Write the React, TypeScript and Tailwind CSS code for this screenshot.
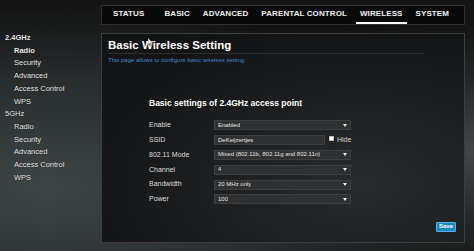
import React from "react";

const sideItems = [
  { label: "2.4GHz", sub: false, bold: true },
  { label: "Radio", sub: true, bold: true },
  { label: "Security", sub: true, bold: false },
  { label: "Advanced", sub: true, bold: false },
  { label: "Access Control", sub: true, bold: false },
  { label: "WPS", sub: true, bold: false },
  { label: "5GHz", sub: false, bold: false },
  { label: "Radio", sub: true, bold: false },
  { label: "Security", sub: true, bold: false },
  { label: "Advanced", sub: true, bold: false },
  { label: "Access Control", sub: true, bold: false },
  { label: "WPS", sub: true, bold: false },
];

const navItems = ["STATUS", "BASIC", "ADVANCED", "PARENTAL CONTROL", "WIRELESS", "SYSTEM"];

function Arrow() {
  return (
    <svg width="4" height="3" viewBox="0 0 4 3" className="shrink-0">
      <path d="M0 0h4L2 3z" fill="#f2f2f2" />
    </svg>
  );
}

function SelectBox({ value }: { value: string }) {
  return (
    <div className="w-[137px] h-[10px] bg-[#2f3031] border border-[#3d3e3f] flex items-center justify-between pl-[3px] pr-[3px] text-[6px] text-[#e4e4e4]">
      <span className="truncate">{value}</span>
      <Arrow />
    </div>
  );
}

export default function App() {
  const rows: { label: string; value?: string; ssid?: boolean }[] = [
    { label: "Enable", value: "Enabled" },
    { label: "SSID", ssid: true },
    { label: "802.11 Mode", value: "Mixed (802.11b, 802.11g and 802.11n)" },
    { label: "Channel", value: "4" },
    { label: "Bandwidth", value: "20 MHz only" },
    { label: "Power", value: "100" },
  ];

  return (
    <div
      className="relative w-[474px] h-[251px] overflow-hidden flex bg-[#141414] bg-[image:radial-gradient(ellipse_at_10%_75%,#3e4647_0%,#2b3132_35%,transparent_70%),radial-gradient(ellipse_at_100%_60%,#414748_0%,#262a2b_30%,transparent_60%)] font-['Liberation_Sans',Arial,sans-serif]"
    >
      {/* sidebar */}
      <div className="w-[101px] shrink-0 pt-[32px] flex flex-col">
        {sideItems.map((it, i) => (
          <div
            key={i}
            className={`h-[12.73px] leading-[12.73px] text-[7.5px] text-[#ececec] [text-shadow:0_0_1px_#000] ${
              it.sub ? "pl-[14px]" : "pl-[5px]"
            } ${it.bold ? "font-bold" : ""}`}
          >
            {it.label}
          </div>
        ))}
      </div>

      {/* main column */}
      <div className="w-[364px] shrink-0 pt-[5px] flex flex-col">
        <div className="h-[20px] bg-[#0a0a0a] border border-[#2e2e2e] flex items-stretch pl-[7px] gap-[5px]">
          {navItems.map((n, i) => (
            <div
              key={n}
              className={`px-[4px] flex items-center border-b-2 text-[8px] font-bold text-[#f0f0f0] tracking-[0.1px] ${
                n === "WIRELESS" ? "border-white" : "border-transparent"
              } ${i === 0 ? "mr-[7px]" : ""}`}
            >
              {n}
            </div>
          ))}
        </div>

        <div className="mt-[8px] h-[210px] border border-[#3c3d3e] bg-[#141516] bg-[image:radial-gradient(ellipse_at_72%_72%,#292c2e_0%,#1b1d1e_45%,#131415_80%)] flex flex-col pl-[6px]">
          <div className="mt-[5px] w-[316px] border-b border-[#2c2d2e] pb-[1px]">
            <div className="text-[11.5px] leading-[13px] font-bold text-white">Basic Wireless Setting</div>
          </div>
          <div className="mt-[2px] text-[6px] leading-[8px] text-[#3d8ccc]">
            This page allows to configure basic wireless setting
          </div>

          <div className="mt-[34px] pl-[41px] flex flex-col">
            <div className="text-[8.5px] leading-[11px] font-bold text-white">
              Basic settings of 2.4GHz access point
            </div>
            <div className="mt-[9px] flex flex-col">
              {rows.map((r) => (
                <div key={r.label} className="h-[14.8px] flex items-center">
                  <div className="w-[65px] text-[7px] text-[#dedede]">{r.label}</div>
                  {r.ssid ? (
                    <div className="flex items-center">
                      <div className="w-[111px] h-[10px] bg-[#2f3031] border border-[#3d3e3f] flex items-center pl-[3px] text-[6px] text-[#e4e4e4]">
                        DeKeijzertjes
                      </div>
                      <div className="ml-[4px] w-[5px] h-[5px] bg-white border border-[#bbb] self-start mt-[1px]" />
                      <div className="ml-[3px] text-[7px] text-[#d0d0d0]">Hide</div>
                    </div>
                  ) : (
                    <SelectBox value={r.value ?? ""} />
                  )}
                </div>
              ))}
            </div>
          </div>

          <div className="mt-[15px] flex justify-end pr-[8px]">
            <button className="w-[20px] h-[10px] bg-[#1f86c6] border border-[#56b2e8] rounded-[1px] text-[6px] font-bold text-white flex items-center justify-center">
              Save
            </button>
          </div>
        </div>
      </div>

      {/* mouse cursor */}
      <svg className="absolute left-[148px] top-[38px]" width="5" height="8" viewBox="0 0 5 8">
        <path d="M0 0v7l1.6-1.5L2.8 8l1-.5L2.6 5H5z" fill="#f4f4f4" stroke="#222" strokeWidth="0.4" />
      </svg>
    </div>
  );
}
